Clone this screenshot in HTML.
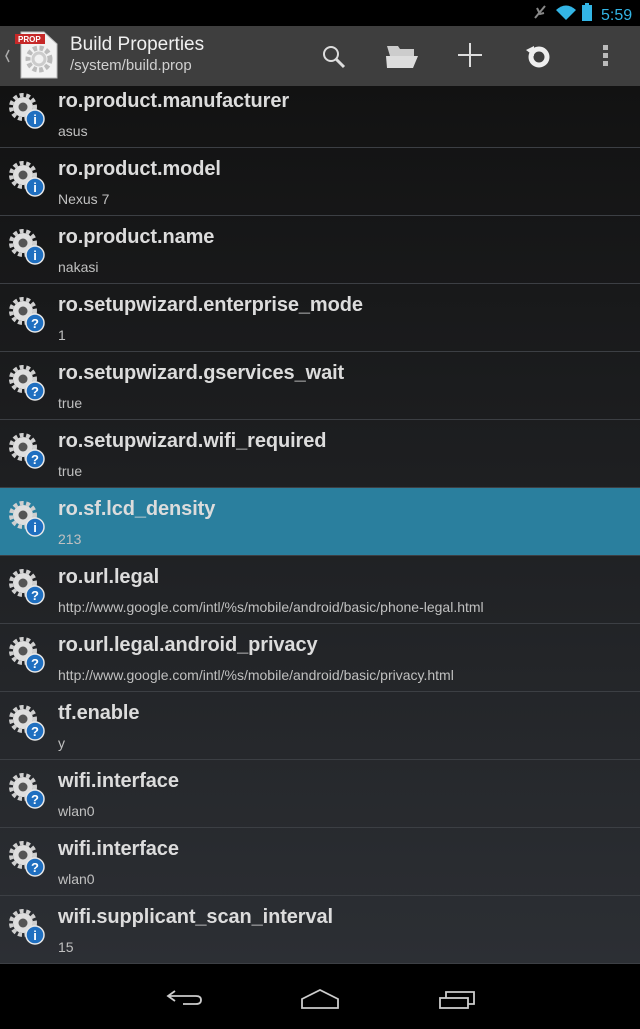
<!DOCTYPE html>
<html><head><style>
*{margin:0;padding:0;box-sizing:border-box}
body{width:640px;height:1024px;background:#000;font-family:"Liberation Sans",sans-serif;position:relative;overflow:hidden}
#sb{position:absolute;top:0;left:0;width:640px;height:26px;background:#000}
#ab{position:absolute;top:26px;left:0;width:640px;height:60px;background:#3e3e3e;z-index:2}
#list{position:absolute;top:80px;left:0;width:640px;height:884px;background:linear-gradient(#121212,#2c2f34)}
.row{position:absolute;left:0;width:640px;height:68px;border-bottom:1px solid #3c3f44}
.row.sel{background:#2a7f9e}
.t{position:absolute;left:58px;top:10px;font-size:20px;color:#dcdcdc;font-weight:bold;letter-spacing:-0.1px;white-space:nowrap}
.s{position:absolute;left:58px;top:43px;font-size:14px;color:#c0c0c0;white-space:nowrap}
.ic{position:absolute;left:8px;top:11px}
#nb{position:absolute;top:964px;left:0;width:640px;height:60px;background:#000}
</style></head><body>
<div id="sb">
<svg width="640" height="26" style="position:absolute;left:0;top:0">
<path d="M535 18 L545 6 M537 8 l3 6 l4 -1" stroke="#888" stroke-width="2" fill="none"/>
<path d="M556 10 Q566 1 576 10 L566 20 Z" fill="#33b5e5"/>
<rect x="582" y="5" width="10" height="16" fill="#33b5e5"/><rect x="585" y="3" width="4" height="3" fill="#33b5e5"/>
<text x="601" y="20" fill="#33b5e5" font-size="16" font-family="Liberation Sans">5:59</text>
</svg></div>
<div id="ab">
<svg width="640" height="60">
<path d="M9 24 L6 30 L9 36" stroke="#aaa" stroke-width="1.5" fill="none"/>
<path d="M21 6 H44 L57 18 V52 H21 Z" fill="#f2f2f2" stroke="#bbb"/>
<rect x="15" y="8" width="30" height="10" fill="#c62828"/><text x="18" y="16" fill="#fff" font-size="8" font-weight="bold">PROP</text>
<circle cx="39" cy="33" r="11" fill="none" stroke="#bbb" stroke-width="5" stroke-dasharray="4 2.5"/><circle cx="39" cy="33" r="6" fill="none" stroke="#ccc" stroke-width="3"/>
<text x="70" y="24" fill="#f0f0f0" font-size="19">Build Properties</text>
<text x="70" y="44" fill="#d0d0d0" font-size="15">/system/build.prop</text>
<circle cx="331" cy="28" r="7" fill="none" stroke="#ddd" stroke-width="2"/><path d="M336 33 L344 41" stroke="#ddd" stroke-width="3"/>
<path d="M387 20 H398 L400 23 H414 V30 H390 Z" fill="#ccc"/><path d="M386 30 H418 L413 42 H387 Z" fill="#ddd"/>
<path d="M470 17 V41 M458 29 H482" stroke="#ddd" stroke-width="2"/>
<circle cx="539" cy="31" r="8" fill="none" stroke="#eee" stroke-width="5"/><path d="M526 24 L534 20 L534 30 Z" fill="#eee"/>
<rect x="603" y="19" width="5" height="5" fill="#bbb"/><rect x="603" y="27" width="5" height="5" fill="#bbb"/><rect x="603" y="35" width="5" height="5" fill="#bbb"/>
</svg></div>
<div id="list"></div>
<div id="nb">
<svg width="640" height="60">
<path d="M175 27 L168 32 L175 37 M168 32 H196 Q201 32 201 36 Q201 40 196 40 H183" stroke="#ccc" stroke-width="1.8" fill="none"/>
<path d="M302 44 V35 L320 26 L338 35 V44 Z" stroke="#ccc" stroke-width="1.8" fill="none"/>
<rect x="440" y="34" width="28" height="10" stroke="#ccc" stroke-width="1.8" fill="none"/><path d="M446 34 V28 H474 V40 H468" stroke="#ccc" stroke-width="1.8" fill="none"/>
</svg></div>
<script>
var d=[["ro.product.manufacturer","asus","i"],["ro.product.model","Nexus 7","i"],["ro.product.name","nakasi","i"],["ro.setupwizard.enterprise_mode","1","?"],["ro.setupwizard.gservices_wait","true","?"],["ro.setupwizard.wifi_required","true","?"],["ro.sf.lcd_density","213","i"],["ro.url.legal","http://www.google.com/intl/%s/mobile/android/basic/phone-legal.html","?"],["ro.url.legal.android_privacy","http://www.google.com/intl/%s/mobile/android/basic/privacy.html","?"],["tf.enable","y","?"],["wifi.interface","wlan0","?"],["wifi.interface","wlan0","?"],["wifi.supplicant_scan_interval","15","i"]];
var h="";d.forEach(function(r,k){h+='<div class="row'+(k==6?' sel':'')+'" style="top:'+(68*k)+'px"><svg class="ic" width="40" height="40"><circle cx="15" cy="16" r="12" fill="none" stroke="#cfcfcf" stroke-width="4" stroke-dasharray="4 2.6"/><circle cx="15" cy="16" r="10" fill="#dedede"/><circle cx="15" cy="16" r="4.5" fill="#555"/><circle cx="27" cy="28" r="9" fill="#1f6fc0" stroke="#e8e8e8" stroke-width="1.5"/><text x="27" y="33" text-anchor="middle" fill="#fff" font-size="13" font-weight="bold" font-family="Liberation Sans">'+r[2]+'</text></svg><div class="t">'+r[0]+'</div><div class="s">'+r[1]+'</div></div>'});
document.getElementById("list").insertAdjacentHTML("beforeend",h);
</script>
</body></html>
